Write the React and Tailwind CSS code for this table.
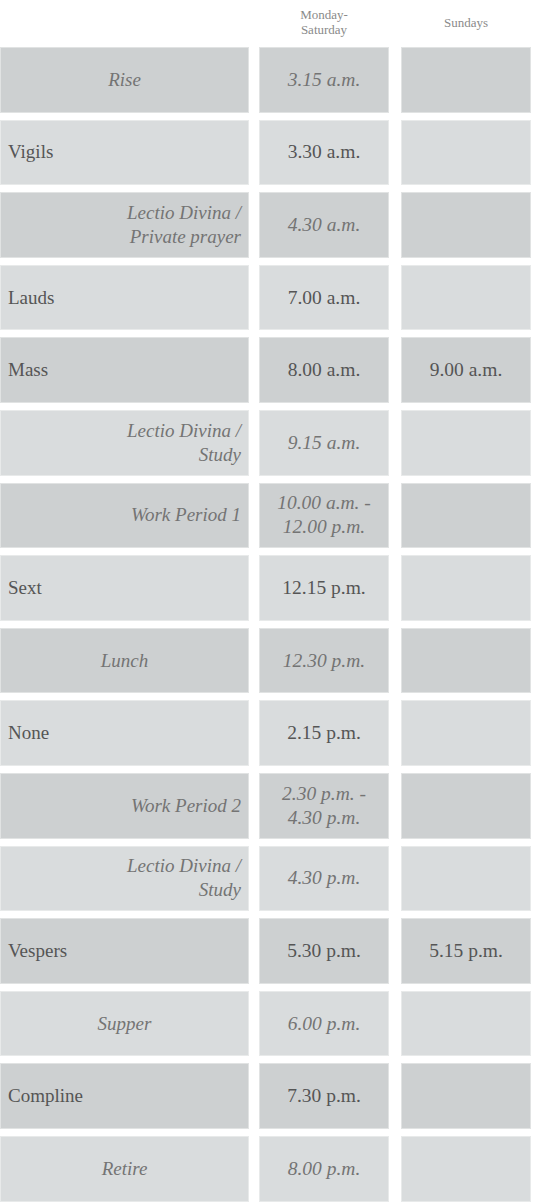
import React from "react";

const rows = [
  { name: "Rise", italic: true, align: "center", ms: "3.15 a.m." },
  { name: "Vigils", ms: "3.30 a.m." },
  { name: ["Lectio Divina /", "Private prayer"], italic: true, align: "right", ms: "4.30 a.m." },
  { name: "Lauds", ms: "7.00 a.m." },
  { name: "Mass", ms: "8.00 a.m.", sun: "9.00 a.m." },
  { name: ["Lectio Divina /", "Study"], italic: true, align: "right", ms: "9.15 a.m." },
  { name: "Work Period 1", italic: true, align: "right", ms: ["10.00 a.m. -", "12.00 p.m."] },
  { name: "Sext", ms: "12.15 p.m." },
  { name: "Lunch", italic: true, align: "center", ms: "12.30 p.m." },
  { name: "None", ms: "2.15 p.m." },
  { name: "Work Period 2", italic: true, align: "right", ms: ["2.30 p.m. -", "4.30 p.m."] },
  { name: ["Lectio Divina /", "Study"], italic: true, align: "right", ms: "4.30 p.m." },
  { name: "Vespers", ms: "5.30 p.m.", sun: "5.15 p.m." },
  { name: "Supper", italic: true, align: "center", ms: "6.00 p.m." },
  { name: "Compline", ms: "7.30 p.m." },
  { name: "Retire", italic: true, align: "center", ms: "8.00 p.m." },
];

function Lines({ v }) {
  const arr = Array.isArray(v) ? v : [v];
  return arr.map((l, i) => <div key={i}>{l}</div>);
}

export default function App() {
  return (
    <div className="w-[534px] min-h-[1203px] bg-white font-['Liberation_Serif','DejaVu_Serif',serif]">
      <div className="flex h-[44px] items-center text-[13px] leading-[15px] text-[#8a8a8a]">
        <div className="w-[249px]" />
        <div className="ml-[10px] w-[130px] text-center">
          <div>Monday-</div>
          <div>Saturday</div>
        </div>
        <div className="ml-[12px] w-[130px] text-center">Sundays</div>
      </div>
      <div className="mt-[3px] flex flex-col gap-[7px]">
        {rows.map((r, i) => {
          const bg = i % 2 === 0 ? "bg-[#cdd0d1]" : "bg-[#d9dcdd]";
          const textCls = r.italic
            ? "italic text-[#747474]"
            : "text-[#555555]";
          const alignCls =
            r.align === "center"
              ? "justify-center text-center"
              : r.align === "right"
              ? "justify-end text-right pr-[7px]"
              : "justify-start text-left pl-[7px]";
          return (
            <div key={i} className="flex h-[65.6px]">
              <div
                className={`flex w-[249px] items-center border border-white/40 ${bg} ${alignCls} ${textCls} text-[19px] leading-[24px]`}
              >
                <div>
                  <Lines v={r.name} />
                </div>
              </div>
              <div
                className={`ml-[10px] flex w-[130px] items-center justify-center border border-white/40 text-center ${bg} ${textCls} text-[19.5px] leading-[24px]`}
              >
                <div>
                  <Lines v={r.ms} />
                </div>
              </div>
              <div
                className={`ml-[12px] flex w-[130px] items-center justify-center border border-white/40 text-center ${bg} text-[#555555] text-[19.5px] leading-[24px]`}
              >
                {r.sun ? <div>{r.sun}</div> : null}
              </div>
            </div>
          );
        })}
      </div>
    </div>
  );
}
